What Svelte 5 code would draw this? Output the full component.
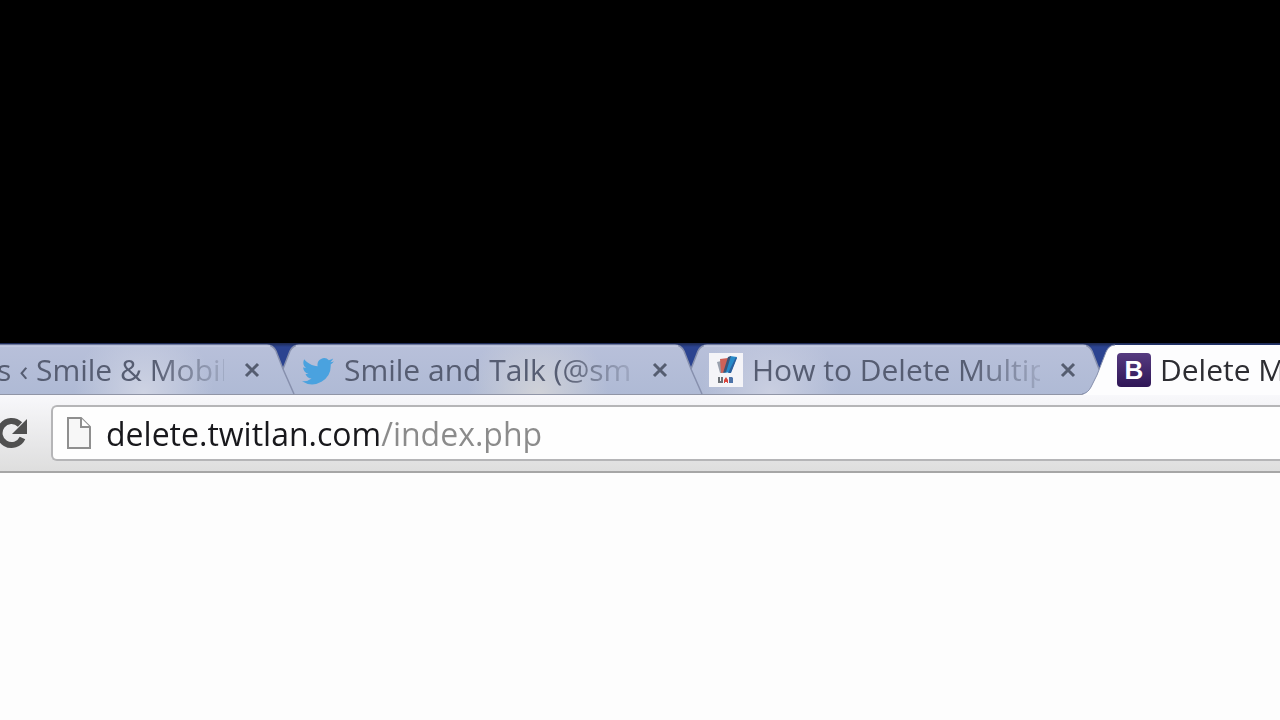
<script>
  let tabs = [
    { id: "posts", title: "Posts ‹ Smile & Mobile", icon: "none", glow: 280, tint: "#ced3e3" },
    { id: "twitter", title: "Smile and Talk (@smileandtalk)", icon: "bird", glow: 266, tint: "#d0d2d8" },
    { id: "howto", title: "How to Delete Multiple Tweets", icon: "cards", glow: 90, tint: "#cacfe1" },
    { id: "delete", title: "Delete Multiple Tweets", icon: "letter", active: true }
  ];
  let address = "delete.twitlan.com/index.php";
</script>

<div class="screen">
  <div class="backdrop"></div>

  <div class="browser">
    <div class="tab-strip" role="tablist">
      {#each tabs as tab, i}
        <div class="tab" class:active={tab.active} style="z-index: {tab.active ? 10 : 5 - i}">
          <svg class="tab-shape" viewBox="0 0 432 52" aria-hidden="true">
            {#if tab.active}
              <path d="M-6 52 Q0 50 3 44 L9 32 L18 9 Q21 2 27 2 H432 V52 Z" fill="#fdfdfe" />
              <path d="M-6 51 Q0 50 3 44 L9 32 L18 9 Q21 2 27 2" fill="none" stroke="#8790ad" />
            {:else}
              <defs>
                <radialGradient id="glow-{tab.id}" gradientUnits="userSpaceOnUse" cx={tab.glow} cy="50" r="70">
                  <stop offset="0" stop-color={tab.tint} />
                  <stop offset="1" stop-color={tab.tint} stop-opacity="0" />
                </radialGradient>
                <linearGradient id="glass-{tab.id}" x1="0" y1="0" x2="0" y2="1">
                  <stop offset="0" stop-color="#b8c0da" />
                  <stop offset="1" stop-color="#afbad5" />
                </linearGradient>
              </defs>
              {#each ["glass", "glow"] as layer}
                <path
                  d="M0 51 L11 26 L18 8 Q21 2 27 2 H403 Q409 2 412 8 L419 26 L430 51 Z"
                  fill="url(#{layer}-{tab.id})"
                />
              {/each}
              <path d="M11 26 L18 8 Q21 2 27 2 H403 Q409 2 412 8 L419 26 L430 51" fill="none" stroke="#8790ad" stroke-width="1.5" />
              <path d="M24 3 H406" stroke="#c6cce3" stroke-width="1.5" />
            {/if}
          </svg>

          <button class="tab-button" type="button" role="tab" aria-selected={!!tab.active}>
            <span class="favicon">
              {#if tab.icon === "bird"}
                <svg viewBox="-1 -1 34 34" aria-hidden="true">
                  <path
                    d="M32 7.2c-1.2.5-2.4.9-3.8 1 1.4-.8 2.4-2.1 2.9-3.6-1.3.8-2.7 1.3-4.2 1.6A6.6 6.6 0 0 0 15.7 12.2C10.2 11.9 5.4 9.3 2.2 5.3c-1.7 3-.9 6.8 2 8.8-1.1 0-2.1-.3-3-.8 0 3 2.1 5.9 5.3 6.5-1 .3-2 .3-3 .1.8 2.600 3.300 4.500 6.100 4.600A13.200 13.200 0 0 1 0 27.200a18.600 18.600 0 0 0 28.700-16.600c1.300-.9 2.400-2.100 3.300-3.400z"
                    fill="#4aa2df"
                  />
                </svg>
              {:else if tab.icon === "cards"}
                <svg viewBox="0 0 34 34" aria-hidden="true">
                  <rect width="34" height="34" fill="#f4f4f8" />
                  <path d="M8 9 L12 8 L14 20 L11 20 Z" fill="#99a1ae" />
                  <path d="M11 6 L19 5 L18 19 L12 20 Z" fill="#cf6258" />
                  <path d="M21 3 L28 4 L22 19 L15 20 Z" fill="#278ac9" />
                  <path d="M19 4 L22 3 L17 19 L14 20 Z" fill="#3c5678" />
                  <path d="M27 4 L28 5 L22 20 L19 20 Z" fill="#2b5f9e" />
                  <path d="M9 24h2v4h1v-4h2v6H9z" fill="#6d7278" />
                  <path d="M15 30v-3l2-3 2 3v3h-1v-1h-2v1z" fill="#d9453c" />
                  <path d="M20 24h3l1 1v5h-4z" fill="#4c72a8" />
                </svg>
              {:else if tab.icon === "letter"}
                <span class="letter-icon">B</span>
              {/if}
            </span>
            <span class="tab-title">{tab.title}</span>
          </button>

          <button class="tab-close" type="button" aria-label="Close {tab.title}">
            <svg viewBox="0 0 16 16" aria-hidden="true">
              <path d="M2 2 L14 14 M14 2 L2 14" stroke="#555d70" stroke-width="3" />
            </svg>
          </button>
        </div>
      {/each}
    </div>

    <div class="toolbar">
      <button class="reload" type="button" aria-label="Reload">
        <svg viewBox="0 0 36 36" aria-hidden="true">
          <path d="M29.500 23 A12 12 0 1 1 27 9.500" fill="none" stroke="#505050" stroke-width="6" />
          <path d="M34 4 V19 H19 Z" fill="#505050" />
        </svg>
      </button>

      <label class="omnibox">
        <svg class="page-icon" viewBox="0 0 26 34" aria-hidden="true">
          <path d="M2 2 H15 L24 11 V32 H2 Z" fill="#f7f7f7" stroke="#8f8f8f" stroke-width="2" />
          <path d="M15 2 V11 H24" fill="#fff" stroke="#8f8f8f" stroke-width="2" />
        </svg>
        <input type="text" aria-label="Address" spellcheck="false" bind:value={address} />
      </label>
    </div>

    <main class="page"></main>
  </div>
</div>

<style>
  :global(body) {
    background: #000;
  }

  .screen {
    display: flex;
    flex-direction: column;
    min-height: 100vh;
    overflow: hidden;
    font-family: "Open Sans", "Noto Sans", sans-serif;
  }

  .backdrop {
    height: 343px;
    background: #000;
  }

  .browser {
    display: flex;
    flex: 1;
    flex-direction: column;
  }

  button {
    padding: 0;
    border: 0;
    background: none;
    font: inherit;
    color: inherit;
    cursor: pointer;
  }

  svg {
    display: block;
  }

  .tab-strip {
    display: flex;
    height: 52px;
    margin-left: -122px;
    background: linear-gradient(#1c2850 0, #2b4390 4px, #2b4390 100%);
  }

  .tab {
    position: relative;
    display: flex;
    flex: none;
    align-items: center;
    box-sizing: border-box;
    width: 408px;
    padding: 2px 26px 0 15px;
    color: #565d72;
  }

  .tab.active {
    color: #2d2d32;
  }

  .tab-shape {
    position: absolute;
    top: 0;
    left: -14px;
    width: 432px;
    height: 52px;
    overflow: visible;
  }

  .tab-button {
    position: relative;
    display: flex;
    flex: 1;
    gap: 9px;
    align-items: center;
    min-width: 0;
    text-align: left;
  }

  .favicon {
    flex: none;
    width: 34px;
    height: 34px;
  }

  .letter-icon {
    display: block;
    border-radius: 4px;
    background: linear-gradient(#563b80, #2f1656);
    color: #fff;
    font: bold 26px/34px "Liberation Sans", sans-serif;
    text-align: center;
  }

  .tab-title {
    flex: 1;
    overflow: hidden;
    font-size: 30px;
    line-height: 40px;
    white-space: nowrap;
    mask-image: linear-gradient(to right, #000 calc(100% - 70px), rgba(0, 0, 0, 0.2));
  }

  .tab-close {
    position: relative;
    width: 16px;
    height: 16px;
    margin-left: 20px;
  }

  .toolbar {
    position: relative;
    display: flex;
    gap: 22px;
    align-items: center;
    padding: 10px 0;
    border-top: 1px solid #9095a6;
    border-bottom: 2px solid #a6a6a6;
    margin-top: -1px;
    background: linear-gradient(#f8f8fb, #dedede);
  }

  .reload {
    flex: none;
    width: 36px;
    height: 36px;
    margin-left: -7px;
  }

  .omnibox {
    display: flex;
    flex: 1;
    gap: 14px;
    align-items: center;
    padding: 6px 0 6px 13px;
    border: 2px solid #b5b5b7;
    border-right: 0;
    border-radius: 6px 0 0 6px;
    background: #fefefe;
  }

  .page-icon {
    flex: none;
    width: 26px;
    height: 34px;
  }

  /* host in black, path in grey */
  input {
    flex: 1;
    min-width: 0;
    height: 40px;
    padding: 0;
    border: 0;
    outline: 0;
    background: linear-gradient(to right, #18181c 274px, #8b8b8b 274px);
    background-clip: text;
    color: transparent;
    caret-color: #18181c;
    font: inherit;
    font-size: 32px;
  }

  .page {
    flex: 1;
    background: #fdfdfd;
  }
</style>
